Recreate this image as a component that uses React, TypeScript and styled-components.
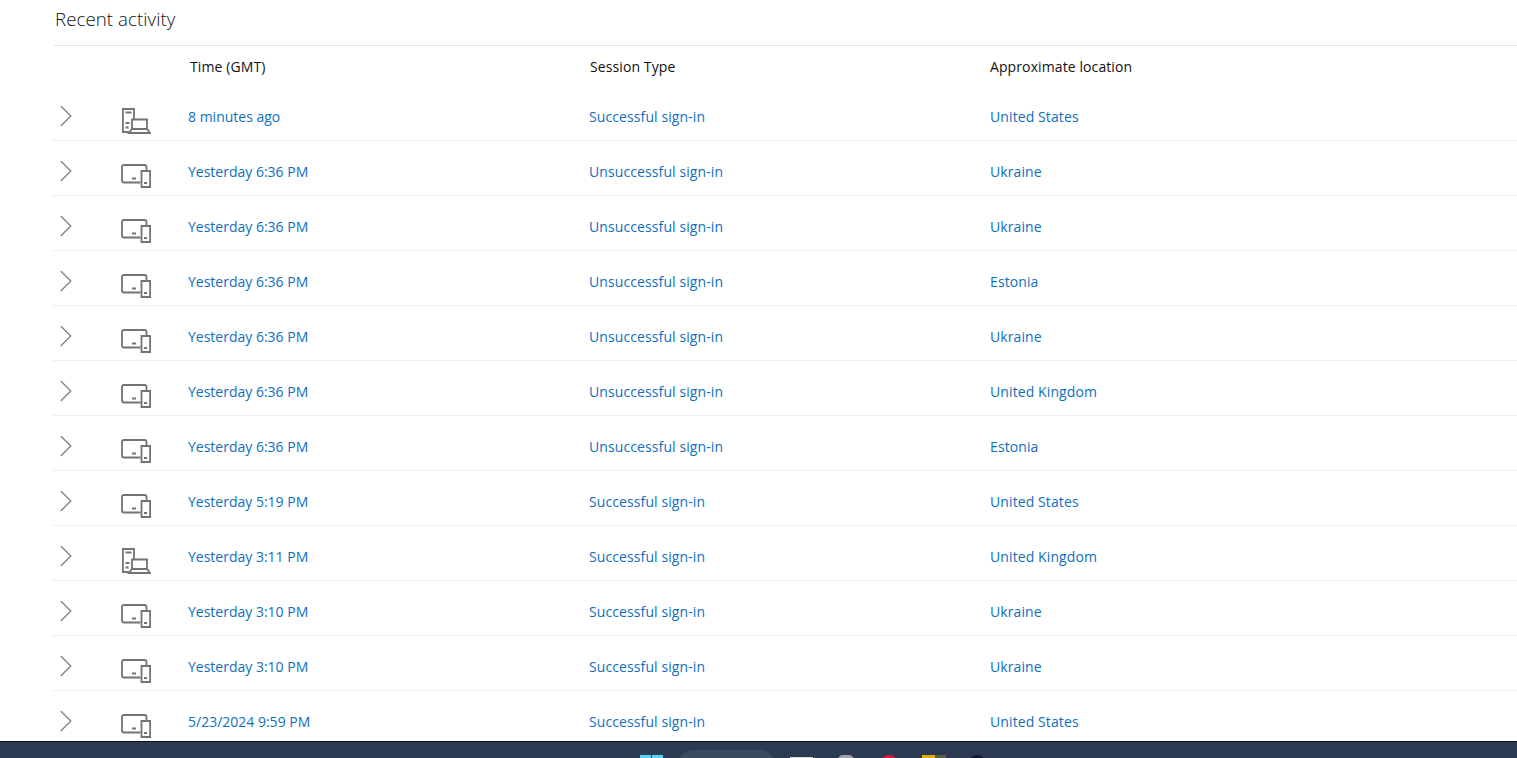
import styled, { createGlobalStyle } from 'styled-components';

const GlobalStyle = createGlobalStyle`
  html,
  body {
    margin: 0;
    padding: 0;
    height: 100%;
    background: #ffffff;
    overflow: hidden;
  }
`;

const Page = styled.div`
  display: flex;
  flex-direction: column;
  height: 758px;
  font-family: 'Open Sans', 'Liberation Sans', sans-serif;
  letter-spacing: 0.1px;
`;

const Content = styled.main`
  flex: 1;
  min-height: 0;
  overflow: hidden;
  padding-left: 54px;
`;

const Title = styled.h2`
  height: 46px;
  margin: 0;
  padding: 7px 0 0 1px;
  box-sizing: border-box;
  font-size: 18.6px;
  font-weight: 300;
  line-height: 24px;
  color: #111111;
  border-bottom: 1px solid #e3e3e3;
`;

const HeaderRow = styled.div`
  display: grid;
  grid-template-columns: 135px 400px 400px 1fr;
  height: 40px;
  align-items: center;
  font-size: 14px;
  color: #111111;
`;

const HeaderCell = styled.span<{ $first?: boolean }>`
  grid-column: ${(p) => (p.$first ? 2 : 'auto')};
  padding-left: 1px;
`;

const Row = styled.div`
  display: grid;
  grid-template-columns: 135px 401px 401px 1fr;
  height: 55px;
  box-sizing: border-box;
  align-items: center;
  padding-top: 7px;
  margin-left: -1px;
  border-bottom: 1px solid #eeeeee;
  font-size: 14px;
  color: #106ebe;
`;

const TimeCell = styled.span`
  letter-spacing: 0;
`;

const IconCell = styled.div`
  display: flex;
  align-items: center;
  gap: 49px;
  padding-left: 7px;
  color: #737373;
`;

const DeviceSlot = styled.div`
  display: flex;
  margin-top: 8px;
`;

const Taskbar = styled.footer`
  display: flex;
  align-items: flex-start;
  flex: none;
  height: 17px;
  box-sizing: border-box;
  padding-left: 640px;
  border-top: 1px solid #0b0f16;
  background: #2d3b52;
  overflow: hidden;
`;

const StartLogo = styled.div`
  display: grid;
  grid-template-columns: 11px 11px;
  gap: 1px;
  margin-top: 13px;
`;

const StartPane = styled.span`
  height: 12px;
  background: linear-gradient(180deg, #5fd4f5, #38b6f0);
`;

const SearchPill = styled.div`
  width: 97px;
  height: 30px;
  margin: 8px 0 0 15px;
  border-radius: 15px;
  background: #3b4a5e;
`;

const FilesIcon = styled.div`
  width: 23px;
  height: 10px;
  margin: 15px 0 0 15px;
  background: #d6d8dc;
`;

const StoreIcon = styled.div`
  width: 16px;
  height: 12px;
  margin: 13px 0 0 25px;
  border-radius: 5px 5px 0 0;
  background: #9ea3a8;
`;

const RedIcon = styled.div`
  width: 16px;
  height: 16px;
  margin: 13px 0 0 27px;
  border-radius: 50%;
  background: #dc1c2b;
`;

const FolderIcon = styled.div`
  width: 24px;
  height: 12px;
  margin: 13px 0 0 25px;
  background: linear-gradient(90deg, #e5a913 0 55%, #5f5a48 55% 100%);
`;

const DarkIcon = styled.div`
  width: 16px;
  height: 16px;
  margin: 13px 0 0 23px;
  border-radius: 50%;
  background: #121c33;
`;

const Chevron = () => (
  <svg width="12" height="22" viewBox="0 0 12 22" fill="none">
    <path d="M.8 0l10 10-10 10" stroke="#808080" strokeWidth="1.3" />
  </svg>
);

const ServerLaptopIcon = () => (
  <svg width="30" height="26" viewBox="0 0 30 26" fill="none" stroke="currentColor" strokeWidth="1.8">
    <path d="M8 24H1.900V1h11.100v10" />
    <path d="M4.500 4.500h6M4.500 15h4M4.500 19.500h3" />
    <path d="M11 11.500h15V21H11z" />
    <path d="M8 25h21l-3-4H11z" />
  </svg>
);

const DevicesIcon = () => (
  <svg width="30" height="24" viewBox="0 0 30 24" fill="none" stroke="currentColor" strokeWidth="1.8">
    <path d="M19.500 18.500H3Q1 18.500 1 16.500V3Q1 1 3 1H23.500Q25.500 1 25.500 3V6.500" />
    <path d="M20.500 7h8.600v16h-8.600z" />
    <path d="M11 14.500h4M23 19h3" />
  </svg>
);

type Session = { time: string; type: string; location: string; server?: boolean };

const sessions: Session[] = [
  { time: '8 minutes ago', type: 'Successful sign-in', location: 'United States', server: true },
  { time: 'Yesterday 6:36 PM', type: 'Unsuccessful sign-in', location: 'Ukraine' },
  { time: 'Yesterday 6:36 PM', type: 'Unsuccessful sign-in', location: 'Ukraine' },
  { time: 'Yesterday 6:36 PM', type: 'Unsuccessful sign-in', location: 'Estonia' },
  { time: 'Yesterday 6:36 PM', type: 'Unsuccessful sign-in', location: 'Ukraine' },
  { time: 'Yesterday 6:36 PM', type: 'Unsuccessful sign-in', location: 'United Kingdom' },
  { time: 'Yesterday 6:36 PM', type: 'Unsuccessful sign-in', location: 'Estonia' },
  { time: 'Yesterday 5:19 PM', type: 'Successful sign-in', location: 'United States' },
  { time: 'Yesterday 3:11 PM', type: 'Successful sign-in', location: 'United Kingdom', server: true },
  { time: 'Yesterday 3:10 PM', type: 'Successful sign-in', location: 'Ukraine' },
  { time: 'Yesterday 3:10 PM', type: 'Successful sign-in', location: 'Ukraine' },
  { time: '5/23/2024 9:59 PM', type: 'Successful sign-in', location: 'United States' },
];

const App = () => (
  <Page>
    <GlobalStyle />
    <Content>
      <Title>Recent activity</Title>
      <HeaderRow>
        <HeaderCell $first>Time (GMT)</HeaderCell>
        <HeaderCell>Session Type</HeaderCell>
        <HeaderCell>Approximate location</HeaderCell>
      </HeaderRow>
      {sessions.map((s, i) => (
        <Row key={i}>
          <IconCell>
            <Chevron />
            <DeviceSlot>{s.server ? <ServerLaptopIcon /> : <DevicesIcon />}</DeviceSlot>
          </IconCell>
          <TimeCell>{s.time}</TimeCell>
          <span>{s.type}</span>
          <span>{s.location}</span>
        </Row>
      ))}
    </Content>
    <Taskbar>
      <StartLogo>
        <StartPane />
        <StartPane />
      </StartLogo>
      <SearchPill />
      <FilesIcon />
      <StoreIcon />
      <RedIcon />
      <FolderIcon />
      <DarkIcon />
    </Taskbar>
  </Page>
);

export default App;
